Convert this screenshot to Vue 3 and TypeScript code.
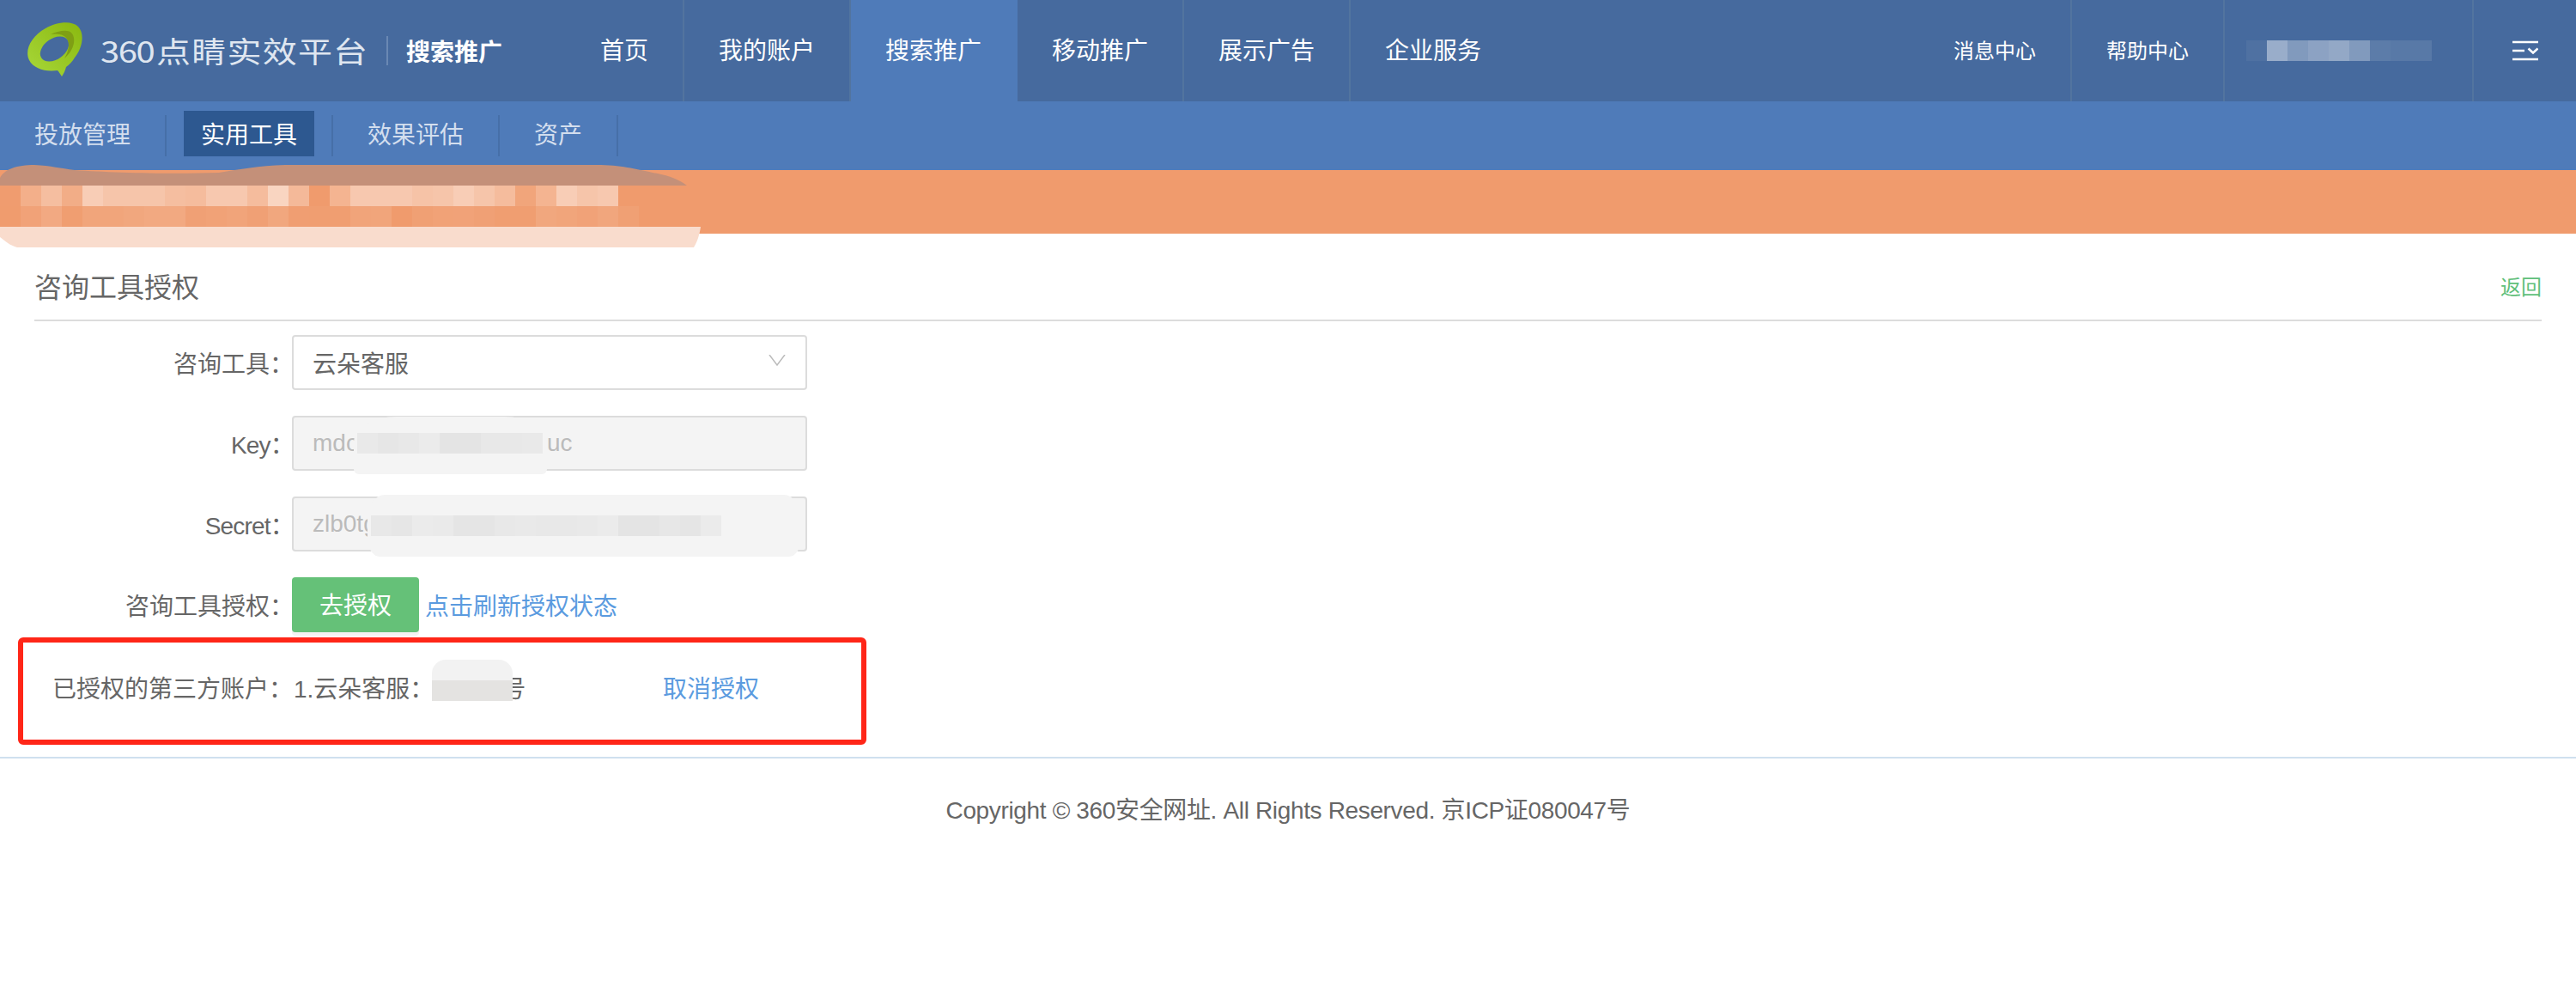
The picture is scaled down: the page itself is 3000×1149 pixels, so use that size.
<script setup lang="ts">
const mainNav = ['首页', '我的账户', '搜索推广', '移动推广', '展示广告', '企业服务']
const subNav = ['投放管理', '实用工具', '效果评估', '资产']

// 打码色块，每格 24px
const bannerTop = [0.02, 0.2, 0.35, 0.18, 0.5, 0.42, 0.42, 0.42, 0.35, 0.33, 0.45, 0.45, 0.33, 0.58, 0.3, 0, 0.25, 0.45, 0.45, 0.45, 0.4, 0.42, 0.5, 0.42, 0.33, 0.1, 0.25, 0.5, 0.42, 0.45]
const bannerBottom = [0.01, 0.08, 0.15, 0.03, 0.1, 0.1, 0.12, 0.14, 0.14, 0.06, 0.07, 0.09, 0.06, 0.12, 0.04, 0.03, 0.03, 0.09, 0.1, 0, 0.05, 0.07, 0.08, 0.06, 0.03, 0.03, 0.12, 0.1, 0.08, 0.11, 0.05]
const userCells = [0.05, 0.45, 0.32, 0.38, 0.42, 0.32, 0.12, 0.1, 0.1]

const keyCells = ['#e9e9e9', '#e6e6e6', '#e8e8e8', '#ebebeb', '#e4e4e4', '#e4e4e4', '#e8e8e8', '#e8e8e8', '#e9e9e9']
const secretCells = ['#e8e8e8', '#e6e6e6', '#ebebeb', '#eaeaea', '#e5e5e5', '#e5e5e5', '#e8e8e8', '#e9e9e9', '#e8e8e8', '#e8e8e8', '#e9e9e9', '#ebebeb', '#e4e4e4', '#e4e4e4', '#e7e7e7', '#e5e5e5', '#ebebeb']

function whiteCell(a: number) {
  return { background: `rgba(255,255,255,${a})` }
}
</script>

<template>
  <div class="page">
    <header class="topbar">
      <div class="brand">
        <svg class="logo" viewBox="0 0 66 66" width="66" height="66">
          <defs>
            <linearGradient id="lg" x1="0" y1="1" x2="1" y2="0">
              <stop offset="0" stop-color="#a8d83a" />
              <stop offset="1" stop-color="#8ab80f" />
            </linearGradient>
          </defs>
          <path fill="url(#lg)" fill-rule="evenodd" d="M41 63c-2-3-3-5-5-7C22 58 8 54 3 44-3 32 6 16 22 7 34 0 52-3 60 5c8 8 5 25-4 36-3 5-6 8-10 11-1 4-3 8-5 11zM17.300 41.600A18.500 12-35 1 1 47.700 20.400 18.500 12-35 1 1 17.300 41.600z" />
          <path fill="#7f9f14" d="M28 14c8-4 20-6 24-2 6 6 4 20-8 30 5-8 6-16 3.700-21.600C46 15 37 12 28 14z" />
        </svg>
        <span class="brand-name"><span class="brand-num">360</span>点睛实效平台</span>
        <span class="brand-sep"></span>
        <span class="brand-sub">搜索推广</span>
      </div>
      <nav class="main-nav">
        <a v-for="(item, i) in mainNav" :key="i" class="main-item" :class="{ on: i === 2 }">{{ item }}</a>
      </nav>
      <div class="top-right">
        <a class="top-link">消息中心</a>
        <a class="top-link">帮助中心</a>
        <div class="user">
          <i v-for="(c, i) in userCells" :key="i" :style="whiteCell(c)"></i>
        </div>
        <div class="menu-btn">
          <svg viewBox="0 0 30 24" width="30" height="24" fill="none" stroke="#fff" stroke-width="2.500">
            <path d="M0 2h30M0 12h14M0 22h30" />
            <path d="M18.500 9.500l5.500 5 5.500-5" />
          </svg>
        </div>
      </div>
    </header>

    <nav class="sub-nav">
      <div v-for="(item, i) in subNav" :key="i" class="sub-item">
        <a class="sub-link" :class="{ on: i === 1 }">{{ item }}</a>
      </div>
    </nav>

    <div class="banner">
      <svg class="banner-blob" viewBox="0 0 830 96" width="830" height="96">
        <path fill="#c49079" d="M0 15C5 5 20 0 40 0c20 1 30 4 47 6 43 3 113 5 168 3 25-4 45-8 77-9h368c30 1 45 6 70 11 15 3 25 9 30 13H0z" />
        <path fill="#f9dccd" d="M0 72h816c-1 8-4 18-8 24H20C12 94 5 88 0 84z" />
      </svg>
      <div class="mosaic">
        <div class="mosaic-row">
          <i v-for="(c, i) in bannerTop" :key="i" :style="whiteCell(c)"></i>
        </div>
        <div class="mosaic-row">
          <i v-for="(c, i) in bannerBottom" :key="i" :style="whiteCell(c)"></i>
        </div>
      </div>
    </div>

    <main class="content">
      <div class="title-row">
        <h2>咨询工具授权</h2>
        <a class="back">返回</a>
      </div>

      <div class="form">
        <div class="row">
          <label>咨询工具：</label>
          <div class="field">
            <span>云朵客服</span>
            <svg class="arrow" viewBox="0 0 20 13" width="20" height="13" fill="none" stroke="#bbb" stroke-width="1.500">
              <path d="M1 0l9 12 9-12" />
            </svg>
          </div>
        </div>
        <div class="row">
          <label class="latin">Key：</label>
          <div class="field disabled">
            <span>mdc</span>
            <span class="key-end">uc</span>
            <div class="smudge key-smudge">
              <i v-for="(c, i) in keyCells" :key="i" :style="{ background: c }"></i>
            </div>
          </div>
        </div>
        <div class="row">
          <label class="latin">Secret：</label>
          <div class="field disabled">
            <span>zlb0tg</span>
            <div class="smudge secret-smudge">
              <i v-for="(c, i) in secretCells" :key="i" :style="{ background: c }"></i>
            </div>
          </div>
        </div>
        <div class="row">
          <label>咨询工具授权：</label>
          <a class="btn">去授权</a>
          <a class="link refresh">点击刷新授权状态</a>
        </div>
      </div>

      <div class="auth-box">
        <span class="auth-label">已授权的第三方账户：</span>
        <span class="auth-name">1.云朵客服：<b class="mask"></b><em>号</em></span>
        <a class="link">取消授权</a>
      </div>
    </main>

    <footer class="footer">Copyright © 360安全网址. All Rights Reserved. 京ICP证080047号</footer>
  </div>
</template>

<style scoped>
.page {
  min-height: 1149px;
  background: #fff;
  color: #666;
  font-family: "Liberation Sans", "Noto Sans CJK SC", sans-serif;
  font-size: 28px;
}

a { cursor: pointer; }

.topbar {
  display: flex;
  height: 118px;
  background: #466a9e;
  color: #fff;
}

.brand {
  display: flex;
  align-items: center;
  width: 659px;
  padding-left: 31px;
  box-sizing: border-box;
}

.logo { margin-right: 20px; }

.brand-name {
  width: 313px;
  font-family: "Noto Sans CJK SC", sans-serif;
  font-size: 40px;
  line-height: 40px;
  letter-spacing: 1.200px;
  color: #dfe6f0;
  white-space: nowrap;
  transform: scaleY(0.85);
}

.brand-num { letter-spacing: -1.500px; margin-right: 3px; }

.brand-sep {
  width: 2px;
  height: 34px;
  margin: 0 21px 0 20px;
  background: #6a88b3;
}

.brand-sub { font-weight: 700; }

.main-nav { display: flex; flex: 1; }

.main-item {
  padding: 1px 40px 0;
  height: 117px;
  line-height: 118px;
  border-right: 2px solid #52749f;
}

.main-item:last-child { border-right: 0; }
.main-item.on { background: #4f7bb9; border-right-color: #4f7bb9; }

.top-right { display: flex; }

.top-link {
  padding: 1px 40px 0;
  height: 117px;
  font-size: 24px;
  line-height: 118px;
  border-right: 2px solid #52749f;
}

.user {
  display: flex;
  align-items: center;
  width: 290px;
  padding-left: 25px;
  box-sizing: border-box;
  border-right: 2px solid #52749f;
}

.user i { width: 24px; height: 24px; }

.menu-btn {
  display: flex;
  align-items: center;
  justify-content: center;
  width: 119px;
}

.sub-nav {
  display: flex;
  height: 80px;
  background: #4f7bb9;
}

.sub-item {
  display: flex;
  align-items: flex-end;
  height: 48px;
  margin-top: 16px;
  padding: 0 20px;
  border-right: 2px solid #466fa8;
}

.sub-link {
  display: block;
  padding: 0 20px;
  height: 53px;
  line-height: 58px;
  color: #d3deee;
}

.sub-link.on {
  background: #2d5890;
  color: #fff;
}

.banner {
  position: relative;
  height: 74px;
  background: #f09b6d;
}

.banner-blob {
  position: absolute;
  left: 0;
  top: -6px;
}

.mosaic {
  position: absolute;
  left: 0;
  top: 18px;
}

.mosaic-row { display: flex; }
.mosaic-row i { width: 24px; height: 24px; }

.content { padding: 0 40px; }

.title-row {
  display: flex;
  align-items: center;
  justify-content: space-between;
  height: 80px;
  padding-top: 20px;
  border-bottom: 2px solid #dcdcdc;
}

.title-row h2 {
  margin: 0;
  font-size: 32px;
  font-weight: 400;
}

.back {
  font-size: 24px;
  color: #5fc07a;
}

.form {
  display: flex;
  flex-direction: column;
  gap: 30px;
  margin-top: 16px;
}

.row {
  display: flex;
  align-items: center;
  height: 64px;
}

.row label {
  width: 302px;
  margin-right: -2px;
  text-align: right;
  white-space: nowrap;
}

.row label.latin { letter-spacing: -0.800px; }

.field {
  position: relative;
  display: flex;
  align-items: center;
  justify-content: space-between;
  width: 600px;
  height: 64px;
  padding: 0 22px;
  box-sizing: border-box;
  border: 2px solid #dcdcdc;
  border-radius: 4px;
}

.field.disabled {
  justify-content: flex-start;
  background: #f4f4f4;
  color: #bbb;
}

.arrow { margin-right: 1px; margin-top: -6px; }

.key-end {
  position: absolute;
  left: 295px;
}

.smudge {
  position: absolute;
  display: flex;
  align-items: flex-start;
  background: #f4f4f4;
}

.smudge i {
  flex: none;
  width: 24px;
  height: 24px;
}

.key-smudge {
  left: 70px;
  top: -1px;
  width: 225px;
  height: 67px;
  padding-top: 19px;
  padding-left: 4px;
  box-sizing: border-box;
  border-radius: 50px 50px 6px 6px / 30px 30px 6px 6px;
}

.secret-smudge {
  left: 86px;
  top: -4px;
  width: 505px;
  height: 72px;
  padding-top: 24px;
  padding-left: 4px;
  box-sizing: border-box;
  border-radius: 20px 20px 14px 14px / 30px 30px 22px 22px;
}

.btn {
  width: 148px;
  height: 64px;
  line-height: 67px;
  text-align: center;
  color: #fff;
  background: #65c178;
  border-radius: 4px;
  box-shadow: 0 4px 0 #f3f3f3;
}

.link { color: #5b9bdf; }
.refresh { margin-left: 7px; }

.auth-box {
  display: flex;
  align-items: center;
  width: 988px;
  height: 125px;
  margin: 6px 0 0 -19px;
  padding: 0 0 9px 34px;
  box-sizing: border-box;
  border: 6px solid #ff2618;
  border-radius: 6px;
  white-space: nowrap;
}

.auth-label { width: 281px; }

.auth-name {
  display: flex;
  align-items: center;
  width: 430px;
}

.auth-name em { font-style: normal; }

.mask {
  position: relative;
  z-index: 1;
  width: 94px;
  height: 48px;
  margin: 0 -13px 16px -2px;
  border-radius: 16px 16px 0 0;
  background: linear-gradient(#f2f2f2 50%, #e4e3e1 50%);
}

.footer {
  margin-top: 14px;
  padding-top: 38px;
  text-align: center;
  letter-spacing: -0.350px;
  border-top: 2px solid #cfe0ef;
}
</style>
